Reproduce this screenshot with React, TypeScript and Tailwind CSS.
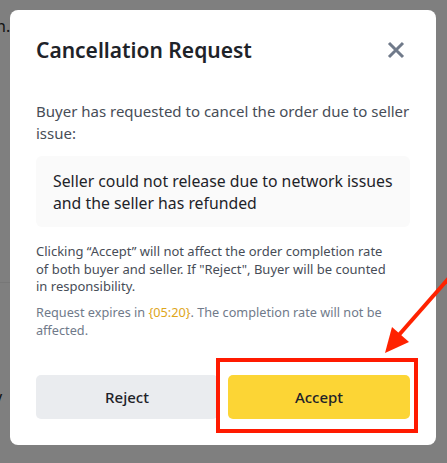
export default function App() {
    return (
        <div className="relative w-[447px] h-[463px] overflow-hidden bg-[#7f7f7f] font-['Noto_Sans',sans-serif]">
            {/* page behind the overlay */}
            <div className="absolute inset-0">
                <p className="absolute left-[-4px] top-[14px] text-[16px] text-[#111]">n.</p>
                <div className="absolute left-0 top-[282px] w-[12px] border-t border-[#777]" />
                <p className="absolute left-[-6px] top-[385px] text-[16px] text-[#111]">y</p>
            </div>

            <div className="absolute left-[10px] top-[10px] w-[426px] h-[435px] bg-white rounded-[8px] px-[26px] pt-[24px] flex flex-col">
                <div className="flex items-center justify-between">
                    <h2 className="text-[21px] font-semibold text-[#1e2329] leading-[32px]">Cancellation Request</h2>
                    <svg width="18" height="18" viewBox="0 0 18 18" className="mr-[5px]">
                        <path d="M2 2L16 16M16 2L2 16" stroke="#707a8a" strokeWidth="3" />
                    </svg>
                </div>

                <p className="mt-[34px] text-[15px] leading-[22px] text-[#474d57]">
                    Buyer has requested to cancel the order due to seller issue:
                </p>

                <div className="mt-[12px] bg-[#fafafa] rounded-[6px] pl-[17px] pr-[12px] py-[13.5px] text-[15.8px] leading-[22px] text-[#1e2329]">
                    Seller could not release due to network issues and the seller has refunded
                </div>

                <p className="mt-[16px] max-w-[358px] text-[13px] leading-[17.5px] text-[#474d57]">
                    Clicking “Accept” will not affect the order completion rate of both buyer and seller. If "Reject", Buyer will be counted in responsibility.
                </p>
                <p className="mt-[8.5px] text-[12.7px] leading-[17.5px] text-[#707a8a]">
                    Request expires in <span className="text-[#dea61a]">{"{05:20}"}</span>. The completion rate will not be affected.
                </p>

                <div className="mt-[36px] flex gap-[10px]">
                    <button className="flex-1 h-[44px] rounded-[5px] bg-[#eaecef] text-[15px] font-medium text-[#1e2329]">Reject</button>
                    <div className="relative flex-1">
                        <button className="w-full h-[44px] rounded-[5px] bg-[#fcd535] text-[15px] font-medium text-[#1e2329]">Accept</button>
                        <div className="absolute left-[-12px] top-[-17px] w-[202px] h-[75px] border-[4px] border-[#ff1a00]" />
                    </div>
                </div>
            </div>

            <svg className="absolute inset-0" width="447" height="463" viewBox="0 0 447 463">
                <line x1="449" y1="278" x2="398" y2="336" stroke="#ff2200" strokeWidth="4" />
                <polygon points="385,353 392,327 409,342" fill="#ff2200" />
            </svg>
        </div>
    )
}
